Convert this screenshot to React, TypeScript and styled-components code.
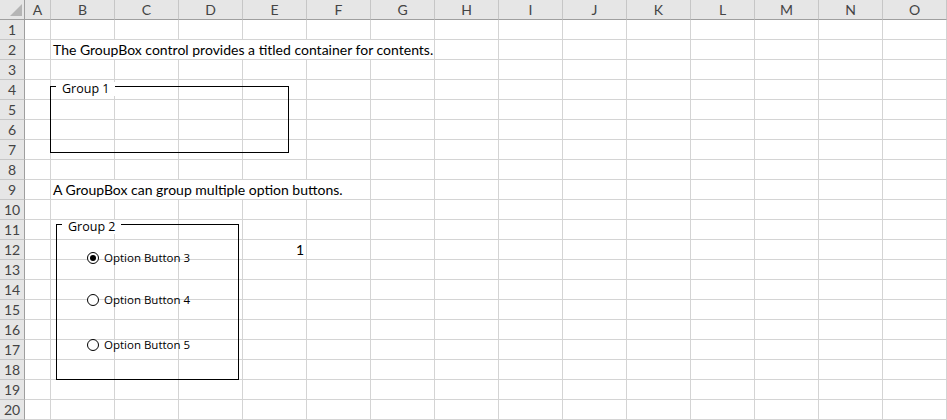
import React from "react";
import styled, { createGlobalStyle } from "styled-components";

const Global = createGlobalStyle`
  html, body { margin: 0; padding: 0; background: #fff; }
  body { width: 947px; height: 420px; overflow: hidden; }
`;

const COLS = ["A", "B", "C", "D", "E", "F", "G", "H", "I", "J", "K", "L", "M", "N", "O"];
const ROWS = Array.from({ length: 20 }, (_, i) => i + 1);

const Sheet = styled.div`
  position: relative;
  display: grid;
  grid-template-columns: 25px 26px repeat(14, 64px);
  grid-auto-rows: 20px;
  width: 947px;
  font-family: Lato, "Open Sans", sans-serif;
`;

const Corner = styled.div`
  background: #e6e6e6;
  border-right: 1px solid #9f9f9f;
  border-bottom: 1px solid #9f9f9f;
  box-sizing: border-box;
  display: flex;
  align-items: flex-start;
  justify-content: flex-end;
  padding: 4px 2px 0 0;
`;

const ColHead = styled.div`
  background: #e6e6e6;
  border-right: 1px solid #c6c6c6;
  border-bottom: 1px solid #9f9f9f;
  box-sizing: border-box;
  display: flex;
  align-items: center;
  justify-content: center;
  font-size: 14px;
  color: #444;
`;

const RowHead = styled.div`
  background: #e6e6e6;
  border-right: 1px solid #9f9f9f;
  border-bottom: 1px solid #c6c6c6;
  box-sizing: border-box;
  display: flex;
  align-items: center;
  justify-content: center;
  font-size: 14px;
  color: #444;
`;

const Cell = styled.div<{ $span?: number; $align?: string }>`
  grid-column: span ${(p) => p.$span ?? 1};
  border-right: 1px solid #d4d4d4;
  border-bottom: 1px solid #d4d4d4;
  box-sizing: border-box;
  display: flex;
  align-items: center;
  justify-content: ${(p) => p.$align ?? "flex-start"};
  padding: 0 2px 0 2px;
  font-size: 14px;
  color: #000;
  white-space: nowrap;
`;

const GroupBox = styled.div<{ $x: number; $y: number; $w: number; $h: number }>`
  position: absolute;
  left: ${(p) => p.$x}px;
  top: ${(p) => p.$y}px;
  width: ${(p) => p.$w}px;
  height: ${(p) => p.$h}px;
  border: 1px solid #000;
  box-sizing: border-box;
  font-family: "Open Sans", "Noto Sans", sans-serif;
  font-size: 12.5px;
  color: #000;
  display: flex;
  flex-direction: column;
  align-items: flex-start;
  padding: 26px 0 0 30px;
`;

const GroupLabel = styled.span`
  position: absolute;
  left: 5px;
  top: -5px;
  padding: 0 6px;
  line-height: 14px;
  background: #fff;
`;

const Option = styled.div<{ $gap?: number }>`
  display: flex;
  align-items: center;
  gap: 5px;
  margin-top: ${(p) => p.$gap ?? 0}px;
  font-size: 11.5px;
  line-height: 14px;
  color: #000;
`;

const Radio = styled.span<{ $checked?: boolean }>`
  position: relative;
  width: 12px;
  height: 12px;
  border: 1px solid #000;
  border-radius: 50%;
  box-sizing: border-box;
  background: #fff;
  &::after {
    content: "";
    display: ${(p) => (p.$checked ? "block" : "none")};
    position: absolute;
    left: 2px;
    top: 2px;
    width: 6px;
    height: 6px;
    border-radius: 50%;
    background: #000;
  }
`;

function rowCells(r: number) {
  if (r === 2) {
    return [
      <Cell key="A" />,
      <Cell key="B" $span={6}>The GroupBox control provides a titled container for contents.</Cell>,
      ...COLS.slice(7).map((c) => <Cell key={c} />),
    ];
  }
  if (r === 9) {
    return [
      <Cell key="A" />,
      <Cell key="B" $span={5}>A GroupBox can group multiple option buttons.</Cell>,
      ...COLS.slice(6).map((c) => <Cell key={c} />),
    ];
  }
  return COLS.map((c) =>
    r === 12 && c === "E" ? (
      <Cell key={c} $align="flex-end">1</Cell>
    ) : (
      <Cell key={c} />
    )
  );
}

export default function App() {
  return (
    <>
      <Global />
      <Sheet>
        <Corner>
          <svg width="12" height="12" viewBox="0 0 12 12">
            <polygon points="12,0 12,12 0,12" fill="#b5b5b5" />
          </svg>
        </Corner>
        {COLS.map((c) => (
          <ColHead key={c}>{c}</ColHead>
        ))}
        {ROWS.map((r) => (
          <React.Fragment key={r}>
            <RowHead>{r}</RowHead>
            {rowCells(r)}
          </React.Fragment>
        ))}

        <GroupBox $x={50} $y={86} $w={239} $h={67}>
          <GroupLabel>Group 1</GroupLabel>
        </GroupBox>

        <GroupBox $x={56} $y={224} $w={183} $h={156}>
          <GroupLabel>Group 2</GroupLabel>
          <Option>
            <Radio $checked />
            Option Button 3
          </Option>
          <Option $gap={28}>
            <Radio />
            Option Button 4
          </Option>
          <Option $gap={31}>
            <Radio />
            Option Button 5
          </Option>
        </GroupBox>
      </Sheet>
    </>
  );
}
